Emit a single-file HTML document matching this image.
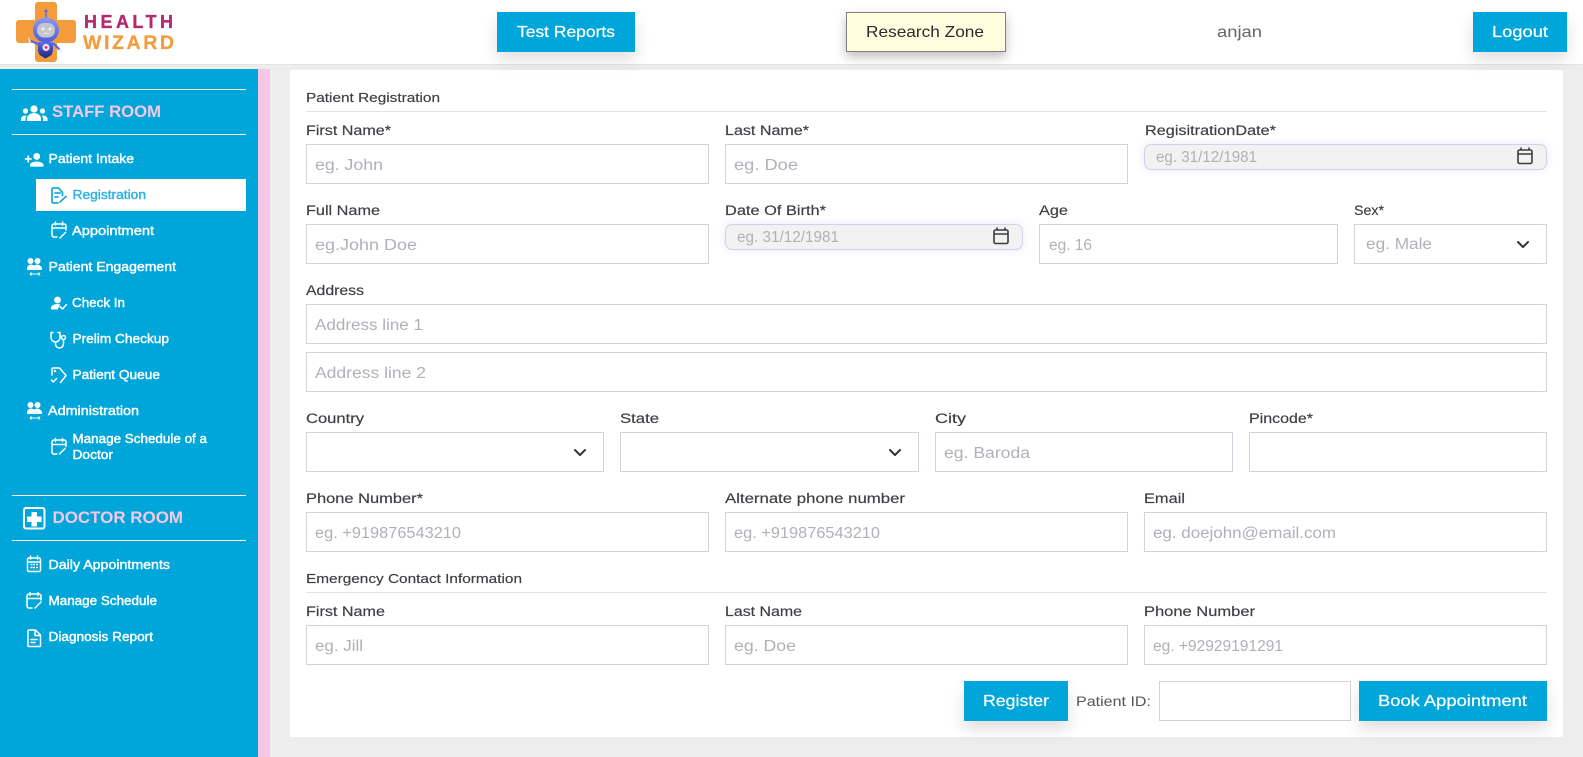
<!DOCTYPE html>
<html lang="en">
<head>
<meta charset="utf-8">
<title>Health Wizard - Patient Registration</title>
<style>
html,body{margin:0;padding:0;width:1583px;height:757px;overflow:hidden;background:#ededed}
.a{position:absolute;box-sizing:border-box}
.hd{left:0;top:0;width:1583px;height:65px;background:#fff;border-bottom:1px solid #e4e4e4}
.bn{background:#00a6da;box-shadow:0 8px 16px rgba(0,0,0,.13)}
.i{background:#fff;border:1px solid #d0d2dc}
.d{background:#f2f2f2;border:1px solid #d2d3e2;border-radius:7px;box-shadow:0 0 8px rgba(90,90,255,.14)}
.ln{background:#fff;height:1px}
.dv{background:#e2e2e6;height:1px}
svg{position:absolute;left:0;top:0}
text{font-family:"Liberation Sans",sans-serif}
.l{font-size:13.5px;fill:#3f3f44;stroke:#3f3f44;stroke-width:.18px}
.t{font-size:13px;fill:#3f3f44;stroke:#3f3f44;stroke-width:.18px}
.p{font-size:15.5px;fill:#b0b0b7}
.s{font-size:12.5px;fill:#fff;stroke:#fff;stroke-width:.4px}
.h{font-size:16.5px;font-weight:700;fill:#f6c8e8}
.b{font-size:16px;fill:#fff;stroke:#fff;stroke-width:.2px}
.ic{fill:none;stroke:#fff;stroke-width:1.5;stroke-linecap:round;stroke-linejoin:round}
.ch{fill:none;stroke:#333;stroke-width:2;stroke-linecap:round;stroke-linejoin:round}
.cal{fill:none;stroke:#3d3d3d;stroke-width:1.6}
</style>
</head>
<body>
<div class="a hd"></div>
<div class="a" style="left:0;top:69px;width:258px;height:688px;background:#00a6da"></div>
<div class="a" style="left:258px;top:69px;width:12px;height:688px;background:#f6c8e8"></div>
<div class="a" style="left:290px;top:70px;width:1273px;height:667px;background:#fff"></div>

<div class="a bn" style="left:497px;top:12px;width:138px;height:40px"></div>
<div class="a" style="left:846px;top:12px;width:160px;height:40px;background:#ffffe0;border:1px solid #808080;box-shadow:0 5px 10px rgba(0,0,0,.25)"></div>
<div class="a bn" style="left:1473px;top:12px;width:94px;height:40px"></div>

<div class="a ln" style="left:12px;top:89px;width:234px"></div>
<div class="a ln" style="left:12px;top:134px;width:234px"></div>
<div class="a" style="left:36px;top:179px;width:210px;height:32px;background:#fff"></div>
<div class="a ln" style="left:12px;top:495px;width:234px"></div>
<div class="a ln" style="left:12px;top:540px;width:234px"></div>

<div class="a dv" style="left:306px;top:111px;width:1241px"></div>
<div class="a i" style="left:306px;top:144px;width:403px;height:40px"></div>
<div class="a i" style="left:725px;top:144px;width:403px;height:40px"></div>
<div class="a d" style="left:1144px;top:144px;width:403px;height:26px"></div>
<div class="a i" style="left:306px;top:224px;width:403px;height:40px"></div>
<div class="a d" style="left:725px;top:224px;width:298px;height:26px"></div>
<div class="a i" style="left:1039px;top:224px;width:299px;height:40px"></div>
<div class="a i" style="left:1354px;top:224px;width:193px;height:40px"></div>
<div class="a i" style="left:306px;top:304px;width:1241px;height:40px"></div>
<div class="a i" style="left:306px;top:352px;width:1241px;height:40px"></div>
<div class="a i" style="left:306px;top:432px;width:298px;height:40px"></div>
<div class="a i" style="left:620px;top:432px;width:299px;height:40px"></div>
<div class="a i" style="left:935px;top:432px;width:298px;height:40px"></div>
<div class="a i" style="left:1249px;top:432px;width:298px;height:40px"></div>
<div class="a i" style="left:306px;top:512px;width:403px;height:40px"></div>
<div class="a i" style="left:725px;top:512px;width:403px;height:40px"></div>
<div class="a i" style="left:1144px;top:512px;width:403px;height:40px"></div>
<div class="a dv" style="left:306px;top:592px;width:1241px"></div>
<div class="a i" style="left:306px;top:625px;width:403px;height:40px"></div>
<div class="a i" style="left:725px;top:625px;width:403px;height:40px"></div>
<div class="a i" style="left:1144px;top:625px;width:403px;height:40px"></div>
<div class="a bn" style="left:964px;top:681px;width:104px;height:40px"></div>
<div class="a i" style="left:1159px;top:681px;width:192px;height:40px"></div>
<div class="a bn" style="left:1359px;top:681px;width:188px;height:40px"></div>

<svg width="1583" height="757" viewBox="0 0 1583 757" xmlns="http://www.w3.org/2000/svg">
<defs>
<linearGradient id="rb" x1="0" y1="0" x2="0" y2="1"><stop offset="0" stop-color="#8b98f6"/><stop offset="1" stop-color="#4a5ce0"/></linearGradient>
<linearGradient id="rc" x1="0" y1="0" x2="0" y2="1"><stop offset="0" stop-color="#5f72ea"/><stop offset=".45" stop-color="#3b49b8"/><stop offset="1" stop-color="#1f2a70"/></linearGradient>
</defs>
<!-- logo -->
<path d="M38 2h16a3 3 0 0 1 3 3v15h16a3 3 0 0 1 3 3v17a3 3 0 0 1-3 3H57v16a3 3 0 0 1-3 3H38a3 3 0 0 1-3-3V43H19a3 3 0 0 1-3-3V23a3 3 0 0 1 3-3h16V5a3 3 0 0 1 3-3z" fill="#f49c3b"/>
<path d="M46 18v-7" stroke="#5a6be0" stroke-width="1.500"/><circle cx="46" cy="11" r="1.500" fill="#5a6be0"/>
<path d="M38 44l-7-3M54 44l5 5" stroke="#5566e4" stroke-width="2.200" stroke-linecap="round"/>
<path d="M30 41l-1.500-3M30.500 41.500l-2 .5M60 49.500l.5 3M60 49.500l2 1" stroke="#e8ebff" stroke-width="1.200" stroke-linecap="round"/>
<path d="M38 42h15v9l-1.500 4-6 3.500-6-3.500-1.500-4z" fill="url(#rc)"/>
<ellipse cx="46" cy="30" rx="13" ry="12.500" fill="url(#rb)"/>
<rect x="37" y="23" width="18" height="14.500" rx="7" fill="#c6c6c9"/>
<circle cx="43" cy="29" r="1.500" fill="#f2f2f2"/><circle cx="50" cy="29" r="1.500" fill="#f2f2f2"/>
<path d="M44 33q2.500 1.500 5 0" stroke="#f2f2f2" stroke-width=".8" fill="none"/>
<circle cx="46" cy="47.500" r="3.600" fill="#f9dbea"/><path d="M44.500 46.800a1 1 0 0 1 1.500-.3 1 1 0 0 1 1.500.3c.2.900-.8 1.700-1.500 2.300-.7-.6-1.700-1.400-1.500-2.300z" fill="#c62a70"/>
<text x="84" y="28" textLength="89" lengthAdjust="spacing" style="font-size:18px;font-weight:700;fill:#b5296f;stroke:#b5296f;stroke-width:.35px">HEALTH</text>
<text x="83" y="49" textLength="91" lengthAdjust="spacing" style="font-size:19.500px;font-weight:700;fill:#f49c3b;stroke:#f49c3b;stroke-width:.25px">WIZARD</text>

<!-- header text -->
<text class="b" x="517" y="37" textLength="98" lengthAdjust="spacingAndGlyphs">Test Reports</text>
<text x="866" y="37" textLength="118" lengthAdjust="spacingAndGlyphs" style="font-size:16px;fill:#2a2a2a">Research Zone</text>
<text x="1217" y="37" textLength="45" lengthAdjust="spacingAndGlyphs" style="font-size:15.500px;fill:#666">anjan</text>
<text class="b" x="1492" y="37" textLength="56" lengthAdjust="spacingAndGlyphs">Logout</text>

<!-- sidebar -->
<g fill="#fff">
<circle cx="34" cy="109" r="3.600"/><circle cx="25.500" cy="111" r="2.600"/><circle cx="42.500" cy="111" r="2.600"/>
<path d="M27 121v-2.500c0-3 3-5.500 7-5.500s7 2.500 7 5.500V121zM21 121v-2c0-2 2-3.500 4.700-3.500.6 0 .8.100.9.200-.7 1-1.100 2.200-1.100 3.300v2zM47.500 121v-2c0-2-2-3.500-4.700-3.500-.6 0-.8.100-.9.200.7 1 1.100 2.200 1.100 3.300v2z"/>
</g>
<text class="h" x="52" y="117" textLength="109" lengthAdjust="spacingAndGlyphs">STAFF ROOM</text>

<g transform="translate(24 149.600) scale(.85)" fill="#fff"><path d="M15 12c2.210 0 4-1.790 4-4s-1.790-4-4-4-4 1.790-4 4 1.790 4 4 4zm-9-2V7H4v3H1v2h3v3h2v-3h3v-2H6zm9 4c-2.670 0-8 1.340-8 4v2h16v-2c0-2.660-5.330-4-8-4z"/></g>
<text class="s" x="48.500" y="163" textLength="85.500" lengthAdjust="spacingAndGlyphs">Patient Intake</text>

<g fill="none" stroke="#1fa9df" stroke-width="1.800" stroke-linecap="round" stroke-linejoin="round"><path d="M58 203h-4.500a1.500 1.500 0 0 1-1.500-1.500v-12a1.500 1.500 0 0 1 1.500-1.500h5l4 4.500v3"/><path d="M55 193h5M55 197h3"/><path d="M60 202l6-5.500"/></g>
<text class="s" x="72.500" y="199" textLength="73.500" lengthAdjust="spacingAndGlyphs" style="fill:#2db2e2;stroke:#2db2e2">Registration</text>

<g class="ic" stroke-width="1.600"><path d="M57 237h-3a2 2 0 0 1-2-2v-9a2 2 0 0 1 2-2h10a2 2 0 0 1 2 2v4M52 228h14M55.500 222v3M62.500 222v3M60 238l5.500-5.500"/></g>
<text class="s" x="72" y="235" textLength="82" lengthAdjust="spacingAndGlyphs">Appointment</text>

<g fill="#fff"><circle cx="30.500" cy="261" r="3"/><circle cx="37.500" cy="261" r="3"/><path d="M27 270v-1.500c0-2 2-4 3.800-4 1.300 0 2.400.5 3.200 1.300.8-.8 1.900-1.300 3.200-1.300 1.800 0 4.800 2 4.800 4v1.500z"/></g>
<path d="M30 274h10M30 274l1.500-1.500M30 274l1.500 1.500M40 274l-1.500-1.500M40 274l-1.500 1.500" stroke="#fff" stroke-width="1.100" fill="none"/>
<text class="s" x="48.500" y="271" textLength="127.500" lengthAdjust="spacingAndGlyphs">Patient Engagement</text>

<g fill="#fff"><circle cx="57.500" cy="300" r="3.400"/><path d="M51 309.500v-1.500c0-2.500 3-4 6.500-4 1 0 1.800.1 2.600.3l-2.300 5.200z"/></g>
<path d="M60 306.500l2.500 2.500 4-4.500" class="ic" stroke-width="1.300"/>
<text class="s" x="72" y="307" textLength="53" lengthAdjust="spacingAndGlyphs">Check In</text>

<g class="ic"><path d="M53 332.500h-2v5a4.500 4.500 0 0 0 9 0v-5h-2M55.500 342v2a4 4 0 0 0 8 0v-4"/><circle cx="63.500" cy="337.500" r="2"/></g>
<text class="s" x="72.500" y="343" textLength="96.500" lengthAdjust="spacingAndGlyphs">Prelim Checkup</text>

<g class="ic"><path d="M52 375v-6a1 1 0 0 1 1-1h6.500l6.500 7.500-5.500 7"/><path d="M51.500 380l1.800 2 3.200-3.500"/><circle cx="55" cy="371" r=".5"/></g>
<text class="s" x="72.500" y="379" textLength="87.500" lengthAdjust="spacingAndGlyphs">Patient Queue</text>

<g fill="#fff"><circle cx="30.500" cy="405" r="3"/><circle cx="37.500" cy="405" r="3"/><path d="M27 414v-1.500c0-2 2-4 3.800-4 1.300 0 2.400.5 3.200 1.300.8-.8 1.900-1.300 3.200-1.300 1.800 0 4.800 2 4.800 4v1.500z"/></g>
<path d="M30 418h10M30 418l1.500-1.500M30 418l1.500 1.500M40 418l-1.500-1.500M40 418l-1.500 1.500" stroke="#fff" stroke-width="1.100" fill="none"/>
<text class="s" x="48" y="415" textLength="91" lengthAdjust="spacingAndGlyphs">Administration</text>

<g class="ic" stroke-width="1.600"><path d="M57 454h-3a2 2 0 0 1-2-2v-10a2 2 0 0 1 2-2h10a2 2 0 0 1 2 2v4.500M52 444.500h14M55.500 438.500v3M62.500 438.500v3M59.500 454l5.500-5.500"/></g>
<text class="s" x="72.500" y="443" textLength="134.500" lengthAdjust="spacingAndGlyphs">Manage Schedule of a</text>
<text class="s" x="72.500" y="459" textLength="40.500" lengthAdjust="spacingAndGlyphs">Doctor</text>

<rect x="24" y="508" width="20.500" height="20.500" rx="2" fill="none" stroke="#fff" stroke-width="2"/>
<path d="M31.500 512h5.500v4.500h4.500v5.500H37v4.500h-5.500V522H27v-5.500h4.500z" fill="#fff"/>
<text class="h" x="52.500" y="523" textLength="130.500" lengthAdjust="spacingAndGlyphs">DOCTOR ROOM</text>

<g class="ic"><rect x="27.500" y="558" width="13" height="13.500" rx="1.500"/><path d="M27.500 562h13M30.500 556v3M37.500 556v3"/></g>
<path d="M30.500 564.500h2M33 564.500h2M36 564.500h2M30.500 567.500h2M33 567.500h2M36 567.500h2" stroke="#fff" stroke-width="1.500"/>
<text class="s" x="48.500" y="569" textLength="121.500" lengthAdjust="spacingAndGlyphs">Daily Appointments</text>

<g class="ic"><path d="M32 608h-3a2 2 0 0 1-2-2v-10a2 2 0 0 1 2-2h10a2 2 0 0 1 2 2v4M27 598.500h14M30 592.500v3M38 592.500v3M35 608l6-6"/></g>
<text class="s" x="48.500" y="605" textLength="108.500" lengthAdjust="spacingAndGlyphs">Manage Schedule</text>

<g class="ic"><path d="M29 630h6.500l5 5v10.500a1 1 0 0 1-1 1H29a1 1 0 0 1-1-1V631a1 1 0 0 1 1-1zM35 630v5.500h5.500"/><path d="M31 639.500h6M31 642.500h4"/></g>
<text class="s" x="48.500" y="641" textLength="104.500" lengthAdjust="spacingAndGlyphs">Diagnosis Report</text>

<!-- form labels -->
<text class="t" x="306" y="102" textLength="134" lengthAdjust="spacingAndGlyphs">Patient Registration</text>
<text class="l" x="306" y="135" textLength="85" lengthAdjust="spacingAndGlyphs">First Name*</text>
<text class="l" x="725" y="135" textLength="84" lengthAdjust="spacingAndGlyphs">Last Name*</text>
<text class="l" x="1145" y="135" textLength="131" lengthAdjust="spacingAndGlyphs">RegisitrationDate*</text>
<text class="l" x="306" y="215" textLength="74" lengthAdjust="spacingAndGlyphs">Full Name</text>
<text class="l" x="725" y="215" textLength="101" lengthAdjust="spacingAndGlyphs">Date Of Birth*</text>
<text class="l" x="1039" y="215" textLength="29" lengthAdjust="spacingAndGlyphs">Age</text>
<text class="l" x="1354" y="215" textLength="30" lengthAdjust="spacingAndGlyphs">Sex*</text>
<text class="l" x="306" y="295" textLength="58" lengthAdjust="spacingAndGlyphs">Address</text>
<text class="l" x="306" y="423" textLength="58" lengthAdjust="spacingAndGlyphs">Country</text>
<text class="l" x="620" y="423" textLength="39" lengthAdjust="spacingAndGlyphs">State</text>
<text class="l" x="935" y="423" textLength="31" lengthAdjust="spacingAndGlyphs">City</text>
<text class="l" x="1249" y="423" textLength="64" lengthAdjust="spacingAndGlyphs">Pincode*</text>
<text class="l" x="306" y="503" textLength="117" lengthAdjust="spacingAndGlyphs">Phone Number*</text>
<text class="l" x="725" y="503" textLength="180" lengthAdjust="spacingAndGlyphs">Alternate phone number</text>
<text class="l" x="1144" y="503" textLength="41" lengthAdjust="spacingAndGlyphs">Email</text>
<text class="t" x="306" y="583" textLength="216" lengthAdjust="spacingAndGlyphs">Emergency Contact Information</text>
<text class="l" x="306" y="616" textLength="79" lengthAdjust="spacingAndGlyphs">First Name</text>
<text class="l" x="725" y="616" textLength="77" lengthAdjust="spacingAndGlyphs">Last Name</text>
<text class="l" x="1144" y="616" textLength="111" lengthAdjust="spacingAndGlyphs">Phone Number</text>

<!-- placeholders -->
<text class="p" x="315" y="170" textLength="68" lengthAdjust="spacingAndGlyphs">eg. John</text>
<text class="p" x="734" y="170" textLength="64" lengthAdjust="spacingAndGlyphs">eg. Doe</text>
<text class="p" x="1156" y="162" textLength="101" lengthAdjust="spacingAndGlyphs">eg. 31/12/1981</text>
<text class="p" x="315" y="250" textLength="102" lengthAdjust="spacingAndGlyphs">eg.John Doe</text>
<text class="p" x="737" y="242" textLength="102" lengthAdjust="spacingAndGlyphs">eg. 31/12/1981</text>
<text class="p" x="1049" y="250" textLength="43" lengthAdjust="spacingAndGlyphs">eg. 16</text>
<text class="p" x="1366" y="249" textLength="66" lengthAdjust="spacingAndGlyphs">eg. Male</text>
<text class="p" x="315" y="330" textLength="108" lengthAdjust="spacingAndGlyphs">Address line 1</text>
<text class="p" x="315" y="378" textLength="111" lengthAdjust="spacingAndGlyphs">Address line 2</text>
<text class="p" x="944" y="458" textLength="86" lengthAdjust="spacingAndGlyphs">eg. Baroda</text>
<text class="p" x="315" y="538" textLength="146" lengthAdjust="spacingAndGlyphs">eg. +919876543210</text>
<text class="p" x="734" y="538" textLength="146" lengthAdjust="spacingAndGlyphs">eg. +919876543210</text>
<text class="p" x="1153" y="538" textLength="183" lengthAdjust="spacingAndGlyphs">eg. doejohn@email.com</text>
<text class="p" x="315" y="651" textLength="48" lengthAdjust="spacingAndGlyphs">eg. Jill</text>
<text class="p" x="734" y="651" textLength="62" lengthAdjust="spacingAndGlyphs">eg. Doe</text>
<text class="p" x="1153" y="651" textLength="130" lengthAdjust="spacingAndGlyphs">eg. +92929191291</text>

<!-- control icons -->
<g class="cal"><rect x="1518" y="150" width="14" height="13.500" rx="1.500"/><path d="M1518 154h14M1521 147.500v3M1529 147.500v3"/></g>
<g class="cal"><rect x="994" y="230" width="14" height="13.500" rx="1.500"/><path d="M994 234h14M997 227.500v3M1005 227.500v3"/></g>
<path class="ch" d="M1518 242l5 5 5-5"/>
<path class="ch" d="M575 450l5 5 5-5"/>
<path class="ch" d="M890 450l5 5 5-5"/>

<!-- bottom actions -->
<text class="b" x="983" y="706" textLength="66" lengthAdjust="spacingAndGlyphs">Register</text>
<text x="1076" y="706" textLength="75" lengthAdjust="spacingAndGlyphs" style="font-size:14px;fill:#555">Patient ID:</text>
<text class="b" x="1378" y="706" textLength="149" lengthAdjust="spacingAndGlyphs">Book Appointment</text>
</svg>
</body>
</html>
